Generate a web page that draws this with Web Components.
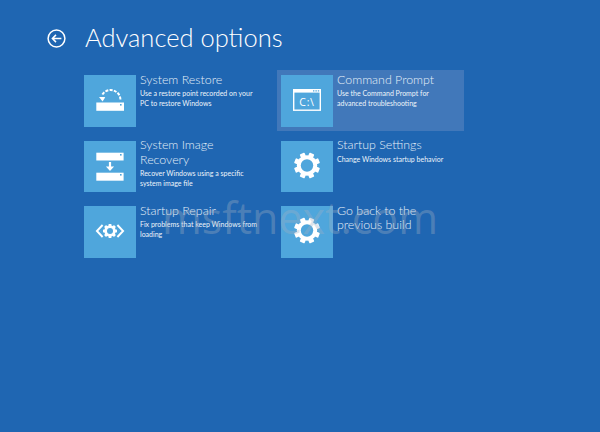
<!DOCTYPE html>
<html>
<head>
<meta charset="utf-8">
<title>Advanced options</title>
<style>
  html, body { margin: 0; height: 100%; }
  body { background: #1f66b2; color: #fff; font-family: Lato, "Open Sans", sans-serif; overflow: hidden; }
</style>
</head>
<body>
<options-screen heading="Advanced options">
  <option-tile heading="System Restore" detail="Use a restore point recorded on your PC to restore Windows">
    <svg slot="icon" viewBox="0 0 52 52" width="52" height="52">
      <path d="M18.4 19.5 A9.8 9.8 0 0 1 36.4 25.5" fill="none" stroke="#fff" stroke-width="2" stroke-dasharray="3 1.3"/>
      <path d="M15 22h6.2l-.6 1.2-2 3.2-3.6-4.4z" fill="#fff"/>
      <rect x="12.3" y="27.5" width="27.7" height="8.3" fill="#fff"/>
      <rect x="36" y="29" width="1.6" height="1.6" fill="#4fa6dc"/>
    </svg>
  </option-tile>
  <option-tile heading="Command Prompt" detail="Use the Command Prompt for advanced troubleshooting" selected>
    <svg slot="icon" viewBox="0 0 52 52" width="52" height="52">
      <rect x="12.7" y="15" width="26.6" height="20.2" fill="none" stroke="#fff" stroke-width="1.4"/>
      <rect x="12" y="14" width="28" height="3.6" fill="#fff"/>
      <path d="M32 15.2h1.4v1.2H32zM34.4 15.2h1.4v1.2h-1.4zM36.8 15.2h1.4v1.2h-1.4z" fill="#4fa6dc"/>
      <text x="26" y="30.6" text-anchor="middle" fill="#fff" font-family="Open Sans, sans-serif" font-size="10.5" letter-spacing=".7">C:\</text>
    </svg>
  </option-tile>
  <option-tile heading="System Image Recovery" detail="Recover Windows using a specific system image file">
    <svg slot="icon" viewBox="0 0 52 52" width="52" height="52">
      <rect x="12.3" y="11.7" width="27.3" height="7.8" fill="#fff"/>
      <rect x="36" y="13" width="1.6" height="1.6" fill="#4fa6dc"/>
      <rect x="12.3" y="31.7" width="27.3" height="8" fill="#fff"/>
      <rect x="36" y="33" width="1.6" height="1.6" fill="#4fa6dc"/>
      <path d="M24.9 21h2.2v4.6h3l-4.1 4.3-4.1-4.3h3z" fill="#fff"/>
    </svg>
  </option-tile>
  <option-tile heading="Startup Settings" detail="Change Windows startup behavior">
    <gear-icon slot="icon"></gear-icon>
  </option-tile>
  <option-tile heading="Startup Repair" detail="Fix problems that keep Windows from loading">
    <svg slot="icon" viewBox="0 0 52 52" width="52" height="52">
      <path d="M18.6 19 12.9 25l5.7 6M33.4 19l5.7 6-5.7 6" fill="none" stroke="#fff" stroke-width="1.9"/>
      <g transform="translate(26 25)" fill="#fff">
        <circle r="4.6" fill="none" stroke="#fff" stroke-width="2.4"/>
        <rect x="-1.4" y="-7" width="2.8" height="14"/>
        <rect x="-1.4" y="-7" width="2.8" height="14" transform="rotate(45)"/>
        <rect x="-1.4" y="-7" width="2.8" height="14" transform="rotate(90)"/>
        <rect x="-1.4" y="-7" width="2.8" height="14" transform="rotate(135)"/>
        <circle r="3" fill="#4fa6dc"/>
      </g>
    </svg>
  </option-tile>
  <option-tile heading="Go back to the previous build">
    <gear-icon slot="icon"></gear-icon>
  </option-tile>
</options-screen>

<script>
class GearIcon extends HTMLElement {
    constructor() {
        super();
        // 8 teeth, drawn as bars through the middle of a ring
        const bars = [0, 45, 90, 135].map(a =>
            `<rect x="-2.6" y="-13" width="5.2" height="26" rx=".8" transform="rotate(${a + 22.5})"/>`).join('');
        this.attachShadow({ mode: 'open' }).innerHTML = `
      <style>:host{display:block;width:52px;height:52px} svg{display:block}</style>
      <svg viewBox="0 0 52 52" width="52" height="52">
        <g transform="translate(26 24.5)" fill="#fff">
          ${bars}
          <circle r="10.2"/>
          <circle r="6.2" fill="#4fa6dc"/>
        </g>
      </svg>`;
    }
}

class OptionTile extends HTMLElement {
    constructor() {
        super();
        this.attachShadow({ mode: 'open' }).innerHTML = `
      <style>
        :host{display:flex;gap:4px;padding:5px 4px 4px;height:51.6px;color:#fff}
        :host([selected]){background:#4178ba}
        .icon{flex:none;width:52px;height:51.6px;background:#4fa6dc;overflow:hidden}
        .text{min-width:0;margin-top:-2.25px;padding-right:3px}
        h2{margin:0;font-size:12.4px;line-height:14.5px;font-weight:300;color:#e4eff8}
        p{margin:0;font-size:7px;line-height:10px;color:#eef5fb}
        h2 + p{margin-top:.75px}
      </style>
      <div class="icon"><slot name="icon"></slot></div>
      <div class="text"><h2></h2><p></p></div>`;
    }
    connectedCallback() {
        this.shadowRoot.querySelector('h2').textContent = this.getAttribute('heading');
        this.shadowRoot.querySelector('p').textContent = this.getAttribute('detail') || '';
    }
}

class OptionsScreen extends HTMLElement {
    constructor() {
        super();
        this.attachShadow({ mode: 'open' }).innerHTML = `
      <style>
        :host{display:block;position:relative;width:600px;height:432px;overflow:hidden}
        header{display:flex;align-items:center;gap:19px;height:42px;padding:17px 0 0 47px;box-sizing:content-box}
        header svg{flex:none}
        h1{margin:0 0 2px;font-size:25.5px;line-height:42px;font-weight:300}
        .grid{display:grid;grid-template-columns:187px 187px;gap:5px 10px;padding:11px 0 0 80px}
        /* watermark lies over everything */
        .mark{position:absolute;left:162px;top:188px;font:400 43px/60px "Open Sans",sans-serif;
              color:rgba(160,175,195,.36);white-space:nowrap;pointer-events:none}
      </style>
      <header>
        <svg viewBox="0 0 19 19" width="19" height="19">
          <circle cx="9.5" cy="9.5" r="8.4" fill="none" stroke="#fff" stroke-width="1.5"/>
          <path d="M14.4 9.5H5.6M9 5.9 5.4 9.5 9 13.1" fill="none" stroke="#fff" stroke-width="1.5"/>
        </svg>
        <h1></h1>
      </header>
      <div class="grid"><slot></slot></div>
      <div class="mark">msftnext.com</div>`;
    }
    connectedCallback() {
        this.shadowRoot.querySelector('h1').textContent = this.getAttribute('heading');
    }
}

customElements.define('gear-icon', GearIcon);
customElements.define('option-tile', OptionTile);
customElements.define('options-screen', OptionsScreen);
</script>
</body>
</html>
